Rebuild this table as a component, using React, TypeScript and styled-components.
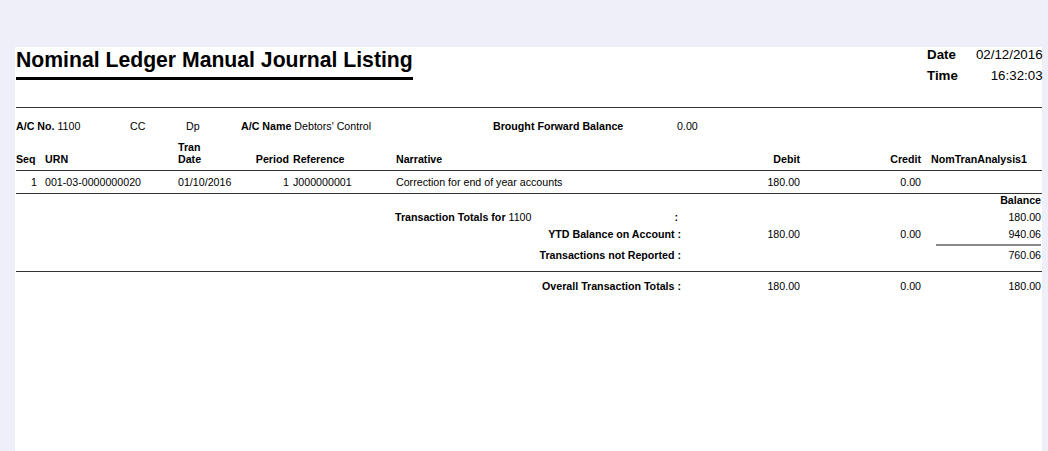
import React from "react";
import styled, { createGlobalStyle } from "styled-components";

const Global = createGlobalStyle`
  html, body { margin: 0; padding: 0; background: #efeff9; }
  body { font-family: "Liberation Sans", Arial, sans-serif; color: #000; }
  #root { min-height: 451px; }
`;

const Page = styled.div`
  height: 451px;
  overflow: hidden;
  padding: 47px 6px 0 15px;
  box-sizing: border-box;
`;

const Paper = styled.div`
  background: #fff;
  height: 100%;
  padding-left: 1px;
  box-sizing: border-box;
  font-size: 10.67px;
  line-height: 12px;
`;

const Header = styled.div`
  display: flex;
  justify-content: space-between;
  align-items: flex-start;
  height: 60px;
  border-bottom: 1px solid #333;
`;

const Title = styled.h1`
  display: inline-block;
  margin: 1px 0 0 0;
  padding-bottom: 5px;
  border-bottom: 3px solid #000;
  font-size: 21.2px;
  line-height: 24px;
  font-weight: bold;
`;

const Stamp = styled.div`
  display: grid;
  grid-template-columns: auto auto;
  column-gap: 18px;
  row-gap: 5px;
  font-size: 13.33px;
  line-height: 16px;
  width: 115px;
`;

const StampLabel = styled.span`
  font-weight: bold;
`;

const StampValue = styled.span`
  text-align: right;
`;

const AccountRow = styled.div`
  display: flex;
  margin-top: 12px;
  height: 12px;
  white-space: nowrap;
`;

const Field = styled.span<{ $w: number }>`
  width: ${(p) => p.$w}px;
  flex: none;
`;

const B = styled.b`
  font-weight: bold;
  margin-right: 3px;
`;

const cols = "29px 133px 62px 53px 103px 304px 100px 121px 121px";

const HeadRow = styled.div`
  display: grid;
  grid-template-columns: ${cols};
  margin-top: 9px;
  padding-bottom: 5px;
  border-bottom: 1px solid #333;
  font-weight: bold;
  align-items: end;
  white-space: nowrap;
`;

const DataRow = styled.div`
  display: grid;
  grid-template-columns: ${cols};
  padding: 5px 0;
  border-bottom: 1px solid #333;
  white-space: nowrap;
`;

const Cell = styled.div<{ $right?: boolean; $pr?: number; $pl?: number }>`
  text-align: ${(p) => (p.$right ? "right" : "left")};
  padding-right: ${(p) => p.$pr ?? 0}px;
  padding-left: ${(p) => p.$pl ?? 0}px;
`;

const totCols = "665px 119px 121px 120px";

const TotRow = styled.div<{ $mt?: number; $bold?: boolean }>`
  display: grid;
  grid-template-columns: ${totCols};
  margin-top: ${(p) => p.$mt ?? 0}px;
  height: 12px;
  white-space: nowrap;
  font-weight: ${(p) => (p.$bold ? "bold" : "normal")};
`;

const Label = styled.div`
  text-align: right;
  font-weight: bold;
`;

const SplitLabel = styled.div`
  display: flex;
  justify-content: space-between;
  padding-left: 379px;
  padding-right: 3px;
  font-weight: bold;
`;

const Plain = styled.span`
  font-weight: normal;
`;

const Num = styled.div`
  text-align: right;
`;

const GrayRule = styled.div`
  display: grid;
  grid-template-columns: ${totCols};
  height: 2px;
  margin-top: 4px;
  & > span:last-child {
    background: #8a8a8a;
    margin-left: 15px;
  }
`;

const Divider = styled.div`
  border-bottom: 1px solid #333;
  margin-top: 10px;
`;

export default function App() {
  return (
    <>
      <Global />
      <Page>
        <Paper>
          <Header>
            <Title>Nominal Ledger Manual Journal Listing</Title>
            <Stamp>
              <StampLabel>Date</StampLabel>
              <StampValue>02/12/2016</StampValue>
              <StampLabel>Time</StampLabel>
              <StampValue>16:32:03</StampValue>
            </Stamp>
          </Header>

          <AccountRow>
            <Field $w={114}>
              <B>A/C No.</B>1100
            </Field>
            <Field $w={56}>CC</Field>
            <Field $w={55}>Dp</Field>
            <Field $w={252}>
              <B>A/C Name</B>Debtors' Control
            </Field>
            <Field $w={184}>
              <B>Brought Forward Balance</B>
            </Field>
            <Field $w={60}>0.00</Field>
          </AccountRow>

          <HeadRow>
            <Cell>Seq</Cell>
            <Cell>URN</Cell>
            <Cell>
              Tran
              <br />
              Date
            </Cell>
            <Cell $right $pr={4}>Period</Cell>
            <Cell>Reference</Cell>
            <Cell>Narrative</Cell>
            <Cell $right>Debit</Cell>
            <Cell $right>Credit</Cell>
            <Cell $pl={10}>NomTranAnalysis1</Cell>
          </HeadRow>

          <DataRow>
            <Cell $right $pr={8}>1</Cell>
            <Cell>001-03-0000000020</Cell>
            <Cell>01/10/2016</Cell>
            <Cell $right $pr={4}>1</Cell>
            <Cell>J000000001</Cell>
            <Cell>Correction for end of year accounts</Cell>
            <Cell $right>180.00</Cell>
            <Cell $right>0.00</Cell>
            <Cell />
          </DataRow>

          <TotRow $bold>
            <div />
            <div />
            <div />
            <Num>Balance</Num>
          </TotRow>
          <TotRow $mt={5}>
            <SplitLabel>
              <span>
                Transaction Totals for <Plain>1100</Plain>
              </span>
              <span>:</span>
            </SplitLabel>
            <div />
            <div />
            <Num>180.00</Num>
          </TotRow>
          <TotRow $mt={5}>
            <Label>YTD Balance on Account :</Label>
            <Num>180.00</Num>
            <Num>0.00</Num>
            <Num>940.06</Num>
          </TotRow>
          <GrayRule>
            <span />
            <span />
            <span />
            <span />
          </GrayRule>
          <TotRow $mt={3}>
            <Label>Transactions not Reported :</Label>
            <div />
            <div />
            <Num>760.06</Num>
          </TotRow>
          <Divider />
          <TotRow $mt={8}>
            <Label>Overall Transaction Totals :</Label>
            <Num>180.00</Num>
            <Num>0.00</Num>
            <Num>180.00</Num>
          </TotRow>
        </Paper>
      </Page>
    </>
  );
}
